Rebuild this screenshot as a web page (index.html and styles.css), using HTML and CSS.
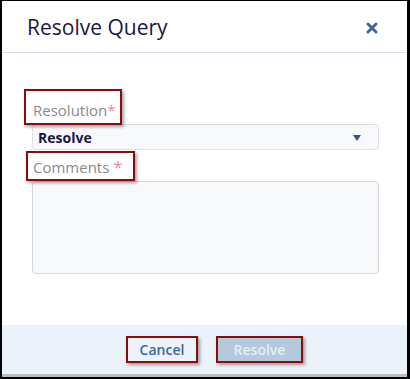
FILE: index.html
```html
<!DOCTYPE html>
<html>
<head>
<meta charset="utf-8">
<link rel="stylesheet" href="styles.css">
</head>
<body>
<div class="dialog">
  <div class="header">
    <h1 class="title">Resolve Query</h1>
    <span class="close" aria-label="Close">
      <svg width="12" height="12" viewBox="0 0 12 12"><path d="M2 2 L10 10 M10 2 L2 10" stroke="#3d679a" stroke-width="3" stroke-linecap="round"/></svg>
    </span>
  </div>
  <div class="content">
    <div class="field">
      <label class="label hl hl-res">Resolution<span class="req">*</span></label>
      <div class="select">
        <span class="select-val">Resolve</span>
        <span class="caret"></span>
      </div>
    </div>
    <div class="field">
      <label class="label hl hl-com">Comments <span class="req req-lg">*</span></label>
      <div class="textarea"></div>
    </div>
  </div>
  <div class="footer">
    <button class="btn btn-cancel hl">Cancel</button>
    <button class="btn btn-resolve hl">Resolve</button>
  </div>
</div>
</body>
</html>
```
FILE: styles.css
```css
html, body {
  margin: 0;
  padding: 0;
  background: #000;
  width: 410px;
  height: 379px;
  overflow: hidden;
}
body {
  font-family: "Open Sans", "Noto Sans", sans-serif;
  padding: 1px 0 0 2px;
  box-sizing: border-box;
}
.dialog {
  width: 405px;
  height: 376px;
  background: #fff;
  display: flex;
  flex-direction: column;
  box-sizing: border-box;
  border-bottom: 3px solid #b9bcc0;
}
.header {
  height: 52px;
  box-sizing: border-box;
  border-bottom: 1px solid #d7e1ee;
  display: flex;
  align-items: center;
  justify-content: space-between;
  padding: 0 29px 0 25px;
}
.title {
  margin: 0;
  font-size: 21px;
  font-weight: 500;
  color: #1b1546;
}
.close {
  display: flex;
  margin-top: 2px;
}
.content {
  flex: 1;
  padding: 47px 28px 0 30px;
}
.field {
  display: flex;
  flex-direction: column;
  align-items: flex-start;
}
.label {
  font-size: 15px;
  color: #8a8a8a;
  line-height: 20px;
  position: relative;
  padding-left: 1px;
}
.req {
  color: #f2849a;
}
.req-lg {
  font-size: 17px;
  line-height: 0;
}
.hl::before {
  content: "";
  position: absolute;
  border: 2px solid #8b0a0a;
  box-shadow: 2px 2px 3px rgba(0,0,0,0.35);
  pointer-events: none;
}
.hl-res::before {
  left: -8px;
  top: -11px;
  right: -7px;
  bottom: -5px;
}
.hl-com::before {
  left: -6px;
  top: -6px;
  right: -12px;
  bottom: -4px;
}
.select {
  align-self: stretch;
  margin-top: 4px;
  height: 26px;
  box-sizing: border-box;
  background: #f8f9fa;
  border: 1px solid #dde0e4;
  border-radius: 4px;
  display: flex;
  align-items: center;
  justify-content: space-between;
  padding: 0 17px 0 5px;
}
.select-val {
  font-size: 14px;
  font-weight: 700;
  color: #1b1546;
}
.caret {
  width: 0;
  height: 0;
  border-left: 4px solid transparent;
  border-right: 4px solid transparent;
  border-top: 6px solid #2d5a8c;
  margin-top: 1px;
}
.field + .field {
  margin-top: 7px;
}
.textarea {
  align-self: stretch;
  margin-top: 4px;
  height: 93px;
  box-sizing: border-box;
  background: #f8f9fa;
  border: 1px solid #d3d6da;
  border-radius: 4px;
}
.footer {
  height: 49px;
  background: #ecf2f9;
  display: flex;
  justify-content: center;
  align-items: center;
  gap: 18px;
  padding-left: 20px;
}
.btn {
  position: relative;
  font-family: "Open Sans", "Noto Sans", sans-serif;
  font-size: 14px;
  font-weight: 600;
  border: none;
  height: 27px;
  padding: 0;
  border-radius: 0;
}
.btn-cancel {
  background: transparent;
  color: #3d679a;
  width: 72px;
}
.btn-resolve {
  background: #b3c9dc;
  color: #e7eef6;
  width: 87px;
}
.btn.hl::before {
  inset: 0;
}
```
